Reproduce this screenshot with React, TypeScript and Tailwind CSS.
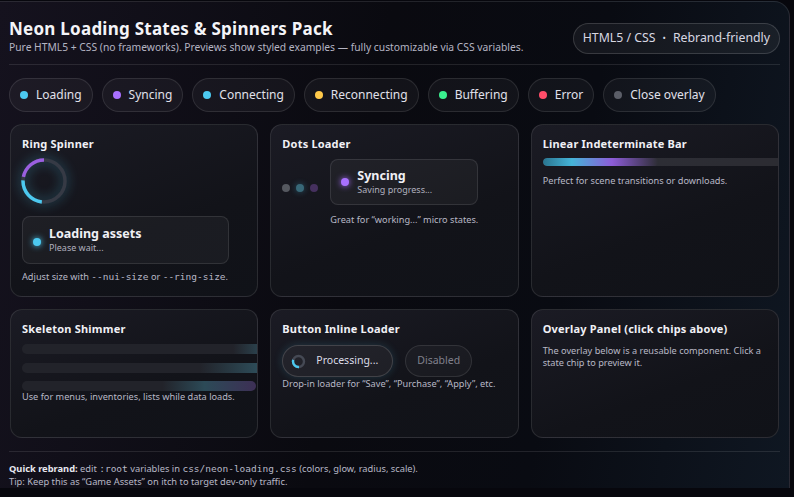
import React from 'react';

const chips = [
    { label: 'Loading', dot: 'bg-[#4cc9f0]' },
    { label: 'Syncing', dot: 'bg-[#a970ff]' },
    { label: 'Connecting', dot: 'bg-[#4cc9f0]' },
    { label: 'Reconnecting', dot: 'bg-[#ffc94a]' },
    { label: 'Buffering', dot: 'bg-[#3af08f]' },
    { label: 'Error', dot: 'bg-[#ff4d6a]' },
    { label: 'Close overlay', dot: 'bg-[#5b5e68]' },
];

function Card({ title, className = '', children }: { title: string; className?: string; children?: React.ReactNode }) {
    return (
        <div
            className={`relative overflow-hidden rounded-[12px] border border-white/10 bg-[linear-gradient(160deg,#1b1b24_0%,#121319_60%,#101218_100%)] px-[11px] pt-[11px] ${className}`}>
            <div className="text-[11px] font-bold leading-[16px] tracking-[0.2px] text-[#f0f0f5]">{title}</div>
            {children}
        </div>
    );
}

function Ring() {
    const c = 2 * Math.PI * 21;
    return (
        <svg width="48" height="48" viewBox="0 0 48 48" className="drop-shadow-[0_0_6px_rgba(76,201,240,0.45)]">
            <g transform="rotate(-90 24 24)">
                <circle cx="24" cy="24" r="21" fill="none" stroke="#363a45" strokeWidth="3.5" />
                <circle
                    cx="24"
                    cy="24"
                    r="21"
                    fill="none"
                    stroke="#4cc9f0"
                    strokeWidth="3.5"
                    strokeDasharray={`${(c * 85) / 360} ${c}`}
                    strokeDashoffset={-(c * 185) / 360}
                />
                <circle
                    cx="24"
                    cy="24"
                    r="21"
                    fill="none"
                    stroke="#9a5fe0"
                    strokeWidth="3.5"
                    strokeDasharray={`${(c * 80) / 360} ${c}`}
                    strokeDashoffset={-(c * 280) / 360}
                />
            </g>
        </svg>
    );
}

function MiniRing() {
    const c = 2 * Math.PI * 5.5;
    return (
        <svg width="15" height="15" viewBox="0 0 15 15">
            <g transform="rotate(-90 7.5 7.5)">
                <circle cx="7.5" cy="7.5" r="5.5" fill="none" stroke="#454954" strokeWidth="2.4" />
                <circle
                    cx="7.5"
                    cy="7.5"
                    r="5.5"
                    fill="none"
                    stroke="#4cc9f0"
                    strokeWidth="2.4"
                    strokeDasharray={`${(c * 110) / 360} ${c}`}
                    strokeDashoffset={-(c * 170) / 360}
                />
            </g>
        </svg>
    );
}

const mono = "font-['DejaVu_Sans_Mono',monospace] text-[9.5px]";

export default function App() {
    return (
        <div className="h-[497px] w-[794px] overflow-hidden bg-[#07070d] font-['Noto_Sans',sans-serif] text-[#e8e8f0]">
            <div className="mt-[1px] mr-[4px] rounded-tr-[16px] border-t border-r border-white/10 bg-[linear-gradient(100deg,#15121e_0%,#0a0a10_45%,#090b12_70%,#0f1722_100%)] pl-[9px] pr-[9px] pt-[16px]">
                <div className="flex h-[36px] items-center justify-between">
                    <div>
                        <h1 className="text-[17px] font-bold leading-[22px] tracking-[0.25px] text-[#f4f4f8]">
                            Neon Loading States &amp; Spinners Pack
                        </h1>
                        <p className="text-[10.3px] leading-[14px] text-[#b4b4c2]">
                            Pure HTML5 + CSS (no frameworks). Previews show styled examples — fully customizable via CSS variables.
                        </p>
                    </div>
                    <div className="mt-[4px] flex h-[31px] items-center rounded-full border border-white/15 bg-white/5 px-[9px] text-[12.3px] text-[#d8d8e2]">
                        HTML5 / CSS <span className="mx-[7px] text-[9px]">•</span> Rebrand-friendly
                    </div>
                </div>
                <div className="mt-[10px] h-px bg-white/10" />
                <div className="mt-[13px] flex gap-[9px]">
                    {chips.map((c) => (
                        <div
                            key={c.label}
                            className="flex h-[34px] items-center gap-[8px] whitespace-nowrap rounded-full border border-white/10 bg-white/[0.04] pl-[10px] pr-[10px] text-[12px] text-[#e0e0ea]">
                            <span className={`h-[8px] w-[8px] rounded-full ${c.dot}`} />
                            {c.label}
                        </div>
                    ))}
                </div>

                <div className="mt-[12px] grid grid-cols-3 gap-x-[12px] gap-y-[12px] pr-[1px] pl-[1px]">
                    <Card title="Ring Spinner" className="h-[173px]">
                        <div className="mt-[5px] ml-[-2px]">
                            <Ring />
                        </div>
                        <div className="mt-[11px] flex h-[48px] w-[207px] items-center gap-[8px] rounded-[8px] border border-white/10 bg-white/[0.04] px-[10px]">
                            <span className="mt-[4px] h-[8px] w-[8px] rounded-full bg-[#4cc9f0] shadow-[0_0_6px_#4cc9f0]" />
                            <div>
                                <div className="text-[12.5px] font-bold leading-[16px] text-[#f0f0f5]">Loading assets</div>
                                <div className="text-[9px] leading-[12px] text-[#b0b0be]">Please wait...</div>
                            </div>
                        </div>
                        <div className="mt-[7px] text-[9.2px] leading-[12px] text-[#b8b8c6]">
                            Adjust size with <span className={mono}>--nui-size</span> or <span className={mono}>--ring-size</span>.
                        </div>
                    </Card>

                    <Card title="Dots Loader" className="h-[173px]">
                        <div className="mt-[7px] flex items-start gap-[12px]">
                            <div className="mt-[25px] flex gap-[6px]">
                                <span className="h-[8px] w-[8px] rounded-full bg-[#55585f]" />
                                <span className="h-[8px] w-[8px] rounded-full bg-[#386878] shadow-[0_0_6px_rgba(76,201,240,0.35)]" />
                                <span className="h-[8px] w-[8px] rounded-full bg-[#45305e]" />
                            </div>
                            <div>
                                <div className="flex h-[46px] w-[148px] items-center gap-[8px] rounded-[8px] border border-white/10 bg-white/[0.04] px-[10px]">
                                    <span className="h-[8px] w-[8px] rounded-full bg-[#a970ff] shadow-[0_0_6px_#a970ff]" />
                                    <div>
                                        <div className="text-[12.5px] font-bold leading-[16px] text-[#f0f0f5]">Syncing</div>
                                        <div className="text-[9px] leading-[12px] text-[#b0b0be]">Saving progress...</div>
                                    </div>
                                </div>
                                <div className="mt-[9px] text-[9.2px] leading-[12px] text-[#b8b8c6]">Great for “working...” micro states.</div>
                            </div>
                        </div>
                    </Card>

                    <Card title="Linear Indeterminate Bar" className="h-[173px]">
                        <div className="relative mt-[6px] h-[8px] w-[240px] overflow-hidden rounded-full bg-white/10">
                            <div className="absolute inset-y-0 left-0 w-[115px] rounded-full bg-[linear-gradient(90deg,#2a7590_0%,#45b4d8_25%,#8d5cd8_60%,rgba(100,70,160,0)_100%)]" />
                        </div>
                        <div className="mt-[9px] text-[9.2px] leading-[12px] text-[#b8b8c6]">Perfect for scene transitions or downloads.</div>
                    </Card>

                    <Card title="Skeleton Shimmer" className="h-[129px]">
                        <div className="mt-[7px] flex flex-col gap-[8.5px]">
                            <div className="h-[10px] w-[240px] rounded-full bg-[linear-gradient(90deg,#22232a_0%,#22232a_88%,#2c4652_100%)]" />
                            <div className="h-[10px] w-[240px] rounded-full bg-[linear-gradient(90deg,#22232a_0%,#22232a_74%,#2e4f5c_100%)]" />
                            <div className="h-[10px] w-[234px] rounded-full bg-[linear-gradient(90deg,#22232a_0%,#22232a_60%,#2c4a57_78%,#3d2f55_100%)]" />
                        </div>
                        <div className="text-[9.2px] leading-[12px] text-[#b8b8c6]">Use for menus, inventories, lists while data loads.</div>
                    </Card>

                    <Card title="Button Inline Loader" className="h-[129px]">
                        <div className="mt-[8px] flex items-center gap-[12px]">
                            <div className="flex h-[32px] items-center gap-[10px] rounded-full border border-white/15 bg-white/[0.05] pl-[8px] pr-[14px] text-[10.5px] text-[#dcdce6] shadow-[0_0_8px_rgba(76,201,240,0.18)]">
                                <MiniRing />
                                Processing...
                            </div>
                            <div className="flex h-[32px] items-center rounded-full border border-white/10 bg-white/[0.03] px-[11px] text-[10.5px] text-[#80808c]">
                                Disabled
                            </div>
                        </div>
                        <div className="mt-[1px] text-[9.2px] leading-[12px] text-[#b8b8c6]">
                            Drop-in loader for “Save”, “Purchase”, “Apply”, etc.
                        </div>
                    </Card>

                    <Card title="Overlay Panel (click chips above)" className="h-[129px]">
                        <div className="mt-[8px] text-[9.2px] leading-[12px] text-[#b8b8c6]">
                            The overlay below is a reusable component. Click a state chip to preview it.
                        </div>
                    </Card>
                </div>

                <div className="mt-[13px] h-px bg-white/10" />
                <div className="mt-[10px] text-[9.3px] leading-[13px] text-[#b8b8c6]">
                    <div>
                        <b className="text-[#e8e8f0]">Quick rebrand:</b> edit <span className={mono}>:root</span> variables in{' '}
                        <span className={mono}>css/neon-loading.css</span> (colors, glow, radius, scale).
                    </div>
                    <div>Tip: Keep this as “Game Assets” on itch to target dev-only traffic.</div>
                </div>
            </div>
        </div>
    );
}
